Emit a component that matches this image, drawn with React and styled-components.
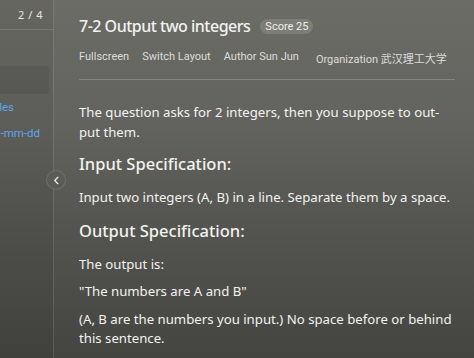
import React from "react";
import styled, { createGlobalStyle } from "styled-components";

const Global = createGlobalStyle`
  html, body { margin: 0; padding: 0; }
  body {
    width: 474px; height: 358px; overflow: hidden;
    font-family: "Noto Sans", "Noto Sans CJK SC", sans-serif;
    background: linear-gradient(180deg, #6c6c67 0%, #62625e 35%, #53534f 65%, #444441 100%);
    color: #f2f2ef;
  }
`;

const Layout = styled.div`
  display: grid;
  grid-template-columns: 54px minmax(0, 1fr);
  height: 358px;
  position: relative;
`;

const Sidebar = styled.aside`
  border-right: 1px solid rgba(255,255,255,0.14);
  background: rgba(0,0,0,0.05);
  display: flex;
  flex-direction: column;
  overflow: hidden;
`;

const Counter = styled.div`
  height: 30px;
  box-sizing: border-box;
  border-bottom: 1px solid rgba(255,255,255,0.12);
  display: flex;
  align-items: center;
  justify-content: flex-end;
  padding-right: 10px;
  font-size: 11px;
  color: #e6e6e2;
  letter-spacing: 0.5px;
`;

const Slot = styled.div`
  height: ${p => p.$h}px;
  background: ${p => p.$bg || "transparent"};
  margin-right: 4px;
`;

const SideLink = styled.div`
  display: flex;
  justify-content: flex-end;
  overflow: hidden;
  white-space: nowrap;
  font-family: Roboto, "Noto Sans", sans-serif;
  font-size: 11.5px;
  color: #5aa7ec;
  height: 26px;
  align-items: center;
  padding-right: ${p => p.$pr || 0}px;
`;

const Collapse = styled.button`
  position: absolute;
  left: 46px;
  top: 170px;
  width: 20px;
  height: 20px;
  border-radius: 50%;
  border: 1px solid rgba(255,255,255,0.12);
  background: #5a5a56;
  display: flex;
  align-items: center;
  justify-content: center;
  padding: 0;
  color: #e8e8e4;
`;

const Main = styled.main`
  padding: 15px 19px 0 25px;
  min-width: 0;
`;

const TitleRow = styled.div`
  display: flex;
  align-items: center;
  gap: 10px;
  height: 22px;
`;

const Title = styled.h1`
  margin: 0;
  font-size: 16px;
  font-weight: 500;
  letter-spacing: -0.5px;
`;

const Badge = styled.span`
  font-size: 11px;
  padding: 1px 5px;
  border-radius: 10px;
  background: rgba(255,255,255,0.13);
  color: #eeeeea;
  font-family: Roboto, "Noto Sans", sans-serif;
`;

const Meta = styled.div`
  display: flex;
  gap: 13px;
  margin-top: 13px;
  font-family: Roboto, "Noto Sans CJK SC", sans-serif;
  font-size: 11px;
  color: #dddcd8;
  padding-bottom: 13px;
  border-bottom: 1px solid rgba(255,255,255,0.2);
  white-space: nowrap;
`;

const MetaItem = styled.span`
  margin-left: ${p => p.$ml || 0}px;
`;

const Body = styled.div`
  padding-top: 23px;
`;

const P = styled.p`
  margin: 0 0 ${p => p.$mb ?? 8}px;
  font-size: 13.2px;
  line-height: 19.5px;
  color: #f3f3f0;
`;

const H = styled.h2`
  margin: 0 0 12px;
  font-size: 16.5px;
  font-weight: 500;
  line-height: 24px;
`;

export default function App() {
  return (
    <>
      <Global />
      <Layout>
        <Sidebar>
          <Counter>2 / 4</Counter>
          <Slot $h={36} />
          <Slot $h={28} $bg="rgba(0,0,0,0.07)" />
          <SideLink $pr={39}>Sorting rules</SideLink>
          <SideLink $pr={13}>yyyy-mm-dd</SideLink>
        </Sidebar>
        <Collapse aria-label="collapse">
          <svg width="9" height="9" viewBox="0 0 10 10" fill="none" stroke="currentColor" strokeWidth="1.5" strokeLinecap="round" strokeLinejoin="round">
            <path d="M6.5 1.5 L3 5 L6.5 8.5" />
          </svg>
        </Collapse>
        <Main>
          <TitleRow>
            <Title>7-2 Output two integers</Title>
            <Badge>Score 25</Badge>
          </TitleRow>
          <Meta>
            <MetaItem>Fullscreen</MetaItem>
            <MetaItem>Switch Layout</MetaItem>
            <MetaItem>Author Sun Jun</MetaItem>
            <MetaItem $ml={4}>Organization 武汉理工大学</MetaItem>
          </Meta>
          <Body>
            <P $mb={10}>The question asks for 2 integers, then you suppose to out-put them.</P>
            <H>Input Specification:</H>
            <P $mb={11}>Input two integers (A, B) in a line. Separate them by a space.</P>
            <H>Output Specification:</H>
            <P>The output is:</P>
            <P $mb={8}>"The numbers are A and B"</P>
            <P>(A, B are the numbers you input.) No space before or behind this sentence.</P>
          </Body>
        </Main>
      </Layout>
    </>
  );
}
